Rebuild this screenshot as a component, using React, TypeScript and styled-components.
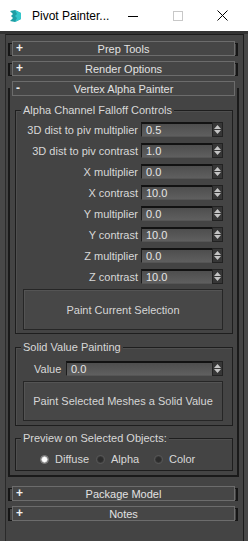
import React from 'react'
import styled, { createGlobalStyle, css } from 'styled-components'

const GlobalStyle = createGlobalStyle`
  html, body {
    margin: 0;
    padding: 0;
    background: #444444;
  }
  body {
    font-family: "Liberation Sans", Arial, sans-serif;
    font-size: 11px;
    color: #dcdcdc;
  }
  * { box-sizing: border-box; }
`

const Window = styled.div`
  width: 248px;
  height: 541px;
  overflow: hidden;
  display: flex;
  flex-direction: column;
  background: #484848;
`

const TitleBar = styled.div`
  height: 31px;
  flex: none;
  display: flex;
  align-items: center;
  padding: 0 3px 0 9px;
  background: #ffffff;
`

const Title = styled.span`
  flex: 1;
  margin-left: 9px;
  font-size: 12px;
  color: #000000;
  white-space: nowrap;
`

const CaptionButton = styled.div`
  width: 45px;
  height: 31px;
  display: flex;
  align-items: center;
  justify-content: center;
`

const Body = styled.div`
  flex: 1;
  display: flex;
  padding: 0 0 0 5px;
  border-top: 3px solid #333333;
`

const Panel = styled.div`
  width: 239px;
  display: flex;
  flex-direction: column;
  gap: 5px;
  padding: 6px 0 0 2px;
  background: #444444;
  border-top: 1px solid #1c1c1c;
  border-left: 1px solid #2a2a2a;
  border-right: 1px solid #1c1c1c;
`

const Rollout = styled.div<{ $open?: boolean }>`
  position: relative;
  width: 231px;
  display: flex;
  flex-direction: column;
  ${p => p.$open && css`margin-bottom: 4px;`}
  ${p => !p.$open && css`
    &::before, &::after {
      content: '';
      position: absolute;
      top: 2px;
      width: 3px;
      height: 11px;
      border: 1px solid #161616;
    }
    &::before { left: 0; border-right: none; border-left-width: 2px; }
    &::after { right: 1px; border-left: none; border-right-width: 2px; }
  `}
`

const RolloutHeader = styled.div`
  position: relative;
  z-index: 1;
  height: 15px;
  margin: 0 4px 0 4px;
  display: flex;
  align-items: center;
  justify-content: center;
  border: 1px solid #6c6c6c;
  background: #464646;
  color: #e2e2e2;
  font-size: 11px;
`

const Sign = styled.span`
  position: absolute;
  left: 3px;
  top: -1px;
  font-size: 12px;
  font-weight: bold;
  color: #f0f0f0;
`

const RolloutBody = styled.div`
  margin-top: -8px;
  padding: 8px 0 4px 0;
  display: flex;
  flex-direction: column;
  border: 2px solid #1a1a1a;
  border-top: none;
`

const Group = styled.div<{ $top: number }>`
  margin: ${p => p.$top}px 4px 0 5px;
  display: flex;
  flex-direction: column;
  border: 1px solid #1e1e1e;
  box-shadow: inset 1px 1px 0 #4f4f4f;
`

const GroupTitle = styled.div`
  align-self: flex-start;
  margin: -7px 0 0 5px;
  padding: 0 2px;
  line-height: 13px;
  background: #444444;
  color: #d8d8d8;
  white-space: nowrap;
`

const Rows = styled.div`
  margin-top: 5px;
  display: flex;
  flex-direction: column;
  gap: 6px;
`

const Row = styled.div`
  height: 15px;
  display: flex;
  align-items: center;
  padding-right: 9px;
`

const Label = styled.span<{ $left?: boolean }>`
  ${p => p.$left
    ? css`width: 43px; padding-left: 18px;`
    : css`flex: 1; text-align: right; padding-right: 3px;`}
  white-space: nowrap;
  color: #d8d8d8;
`

const Field = styled.div<{ $wide?: boolean }>`
  width: ${p => (p.$wide ? 146 : 71)}px;
  ${p => p.$wide && css`margin-left: 7px;`}
  height: 15px;
  display: flex;
  align-items: center;
  padding-left: 4px;
  background: linear-gradient(#4e4e4e, #5f5f5f);
  border-top: 2px solid #121212;
  border-left: 1px solid #1c1c1c;
  border-bottom: 1px solid #555555;
  color: #e6e6e6;
  font-size: 11px;
`

const Spinner = styled.div`
  width: 11px;
  height: 15px;
  display: flex;
  flex-direction: column;
  align-items: center;
  justify-content: space-between;
  padding: 2px 0;
  background: #363636;
  border: 1px solid #222222;
`

const Button = styled.div<{ $h: number; $top: number }>`
  height: ${p => p.$h}px;
  margin: ${p => p.$top}px 9px 0 7px;
  display: flex;
  align-items: center;
  justify-content: center;
  background: #474747;
  border: 1px solid #262626;
  box-shadow: inset 1px 1px 0 #545454;
  color: #d6d6d6;
  font-size: 11px;
`

const RadioRow = styled.div`
  margin-top: 8px;
  height: 12px;
  display: grid;
  grid-template-columns: 56px 58px auto;
  padding-left: 24px;
  align-items: center;
`

const RadioItem = styled.label`
  display: flex;
  align-items: center;
  gap: 6px;
  color: #d8d8d8;
`

const RadioDot = styled.span<{ $on?: boolean }>`
  width: 9px;
  height: 9px;
  border-radius: 50%;
  flex: none;
  background: ${p => (p.$on ? 'radial-gradient(circle, #ffffff 0 2px, #bdbdbd 3px, #2a2a2a 4px)' : 'radial-gradient(circle, #2c2c2c 0 2px, #383838 3px, #262626 4px)')};
  border: 1px solid ${p => (p.$on ? '#8a8a8a' : '#5a5a5a')};
`

const Gap = styled.div<{ $h: number }>`
  height: ${p => p.$h}px;
  flex: none;
`

const MaxIcon = () => (
  <svg width="14" height="14" viewBox="0 0 14 14">
    <path d="M1 2 L6 1 L12 4 L12 10 L6 13 L1 12 L4 9 L2 7 L4 5 Z" fill="#1f9ea4" />
    <path d="M6 1 L12 4 L12 10 L6 13 L8 9 L6 7 L8 5 Z" fill="#35c6cb" />
  </svg>
)

const SpinArrows = () => (
  <>
    <svg width="7" height="4" viewBox="0 0 7 4"><path d="M3.5 0 L7 4 L0 4 Z" fill="#c4c4c4" /></svg>
    <svg width="7" height="4" viewBox="0 0 7 4"><path d="M0 0 L7 0 L3.5 4 Z" fill="#c4c4c4" /></svg>
  </>
)

const falloff = [
  ['3D dist to piv multiplier', '0.5'],
  ['3D dist to piv contrast', '1.0'],
  ['X multiplier', '0.0'],
  ['X contrast', '10.0'],
  ['Y multiplier', '0.0'],
  ['Y contrast', '10.0'],
  ['Z multiplier', '0.0'],
  ['Z contrast', '10.0'],
]

export default function App() {
  return (
    <Window>
      <GlobalStyle />
      <TitleBar>
        <MaxIcon />
        <Title>Pivot Painter...</Title>
        <CaptionButton>
          <svg width="10" height="10" viewBox="0 0 10 10"><path d="M0 5.5 H10" stroke="#000" strokeWidth="1" /></svg>
        </CaptionButton>
        <CaptionButton>
          <svg width="10" height="10" viewBox="0 0 10 10"><rect x="0.5" y="0.5" width="9" height="9" fill="none" stroke="#c8c8c8" /></svg>
        </CaptionButton>
        <CaptionButton>
          <svg width="11" height="11" viewBox="0 0 11 11"><path d="M0.5 0.5 L10.5 10.5 M10.5 0.5 L0.5 10.5" stroke="#000" strokeWidth="1" /></svg>
        </CaptionButton>
      </TitleBar>

      <Body>
        <Panel>
          <Rollout>
            <RolloutHeader><Sign>+</Sign>Prep Tools</RolloutHeader>
          </Rollout>
          <Rollout>
            <RolloutHeader><Sign>+</Sign>Render Options</RolloutHeader>
          </Rollout>
          <Rollout $open>
            <RolloutHeader><Sign>-</Sign>Vertex Alpha Painter</RolloutHeader>
            <RolloutBody>
              <Group $top={14}>
                <GroupTitle>Alpha Channel Falloff Controls</GroupTitle>
                <Rows>
                  {falloff.map(([label, value]) => (
                    <Row key={label}>
                      <Label>{label}</Label>
                      <Field>{value}</Field>
                      <Spinner><SpinArrows /></Spinner>
                    </Row>
                  ))}
                </Rows>
                <Button $h={41} $top={5}>Paint Current Selection</Button>
                <Gap $h={3} />
              </Group>

              <Group $top={13}>
                <GroupTitle>Solid Value Painting</GroupTitle>
                <Gap $h={7} />
                <Row>
                  <Label $left>Value</Label>
                  <Field $wide>0.0</Field>
                  <Spinner><SpinArrows /></Spinner>
                </Row>
                <Button $h={40} $top={5}>Paint Selected Meshes a Solid Value</Button>
                <Gap $h={4} />
              </Group>

              <Group $top={12}>
                <GroupTitle>Preview on Selected Objects:</GroupTitle>
                <RadioRow>
                  <RadioItem><RadioDot $on />Diffuse</RadioItem>
                  <RadioItem><RadioDot />Alpha</RadioItem>
                  <RadioItem><RadioDot />Color</RadioItem>
                </RadioRow>
                <Gap $h={5} />
              </Group>
            </RolloutBody>
          </Rollout>
          <Rollout>
            <RolloutHeader><Sign>+</Sign>Package Model</RolloutHeader>
          </Rollout>
          <Rollout>
            <RolloutHeader><Sign>+</Sign>Notes</RolloutHeader>
          </Rollout>
        </Panel>
      </Body>
    </Window>
  )
}
